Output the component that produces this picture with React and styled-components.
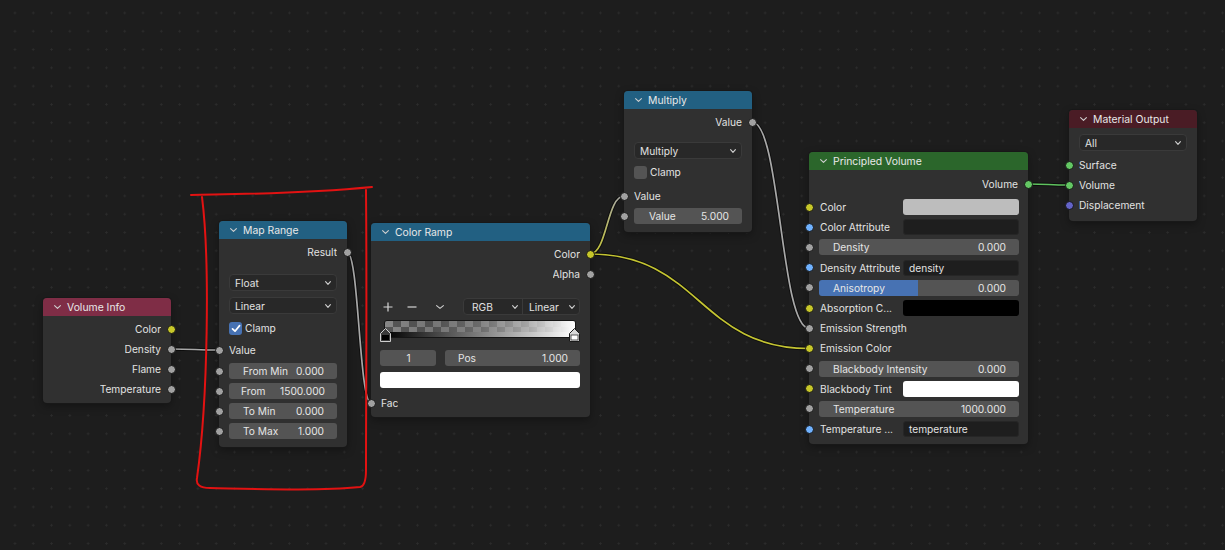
import React from 'react';
import styled, { createGlobalStyle } from 'styled-components';

const Global = createGlobalStyle`
  html, body { margin: 0; padding: 0; background: #1d1d1d; }
  body { font-family: Inter, "Noto Sans", sans-serif; }
`;

const SOCK = {
  float: '#a1a1a1',
  color: '#c7c729',
  string: '#70b2ff',
  vector: '#6363c7',
  shader: '#63c763',
};

const Canvas = styled.div`
  position: relative;
  width: 1225px;
  height: 550px;
  overflow: hidden;
  background-color: #1d1d1d;
  background-image: radial-gradient(circle, #2c2c2c 0.9px, transparent 1.3px);
  background-size: 18.3px 18.3px;
  background-position: 5.8px 3.8px;
  font-family: Inter, "Noto Sans", sans-serif;
  font-size: 10.2px;
  color: #e2e2e2;
`;

const Layer = styled.svg`
  position: absolute;
  left: 0;
  top: 0;
  width: 1225px;
  height: 550px;
  z-index: ${p => p.$z};
  pointer-events: none;
`;

const NodeBox = styled.div`
  position: absolute;
  left: ${p => p.$x}px;
  top: ${p => p.$y}px;
  width: ${p => p.$w}px;
  background: #303030;
  border-radius: 4px;
  box-shadow: 0 0 0 1px #181818, 0 3px 8px rgba(0, 0, 0, 0.35);
  z-index: 2;
`;

const Header = styled.div`
  height: 18px;
  display: flex;
  align-items: center;
  gap: 6px;
  padding-left: 11px;
  background: ${p => p.$color};
  border-radius: 4px 4px 0 0;
  color: #e8e8e8;
  font-size: 10.4px;
`;

const Body = styled.div`
  display: flex;
  flex-direction: column;
  padding: ${p => p.$pt}px 0 ${p => p.$pb}px;
`;

const Row = styled.div`
  position: relative;
  height: ${p => p.$h || 20}px;
  flex: none;
  display: flex;
  align-items: center;
  gap: 3px;
  justify-content: ${p => (p.$out ? 'flex-end' : 'flex-start')};
  padding: 0 ${p => (p.$pr ?? 10)}px 0 ${p => (p.$pl ?? 10)}px;
  white-space: nowrap;
`;

const Spacer = styled.div`
  flex: none;
  height: ${p => p.$h}px;
`;

const Socket = styled.span`
  position: absolute;
  top: 50%;
  ${p => (p.$out ? 'right' : 'left')}: -4.5px;
  margin-top: -4.5px;
  width: 7px;
  height: 7px;
  border-radius: 50%;
  background: ${p => p.$c};
  border: 1px solid #141414;
`;

const Label = styled.span`
  flex: ${p => (p.$grow ? 1 : 'none')};
  overflow: hidden;
`;

const NumField = styled.div`
  flex: ${p => (p.$w ? 'none' : 1)};
  width: ${p => (p.$w ? `${p.$w}px` : 'auto')};
  height: 16px;
  border-radius: 3px;
  background: ${p =>
    p.$fill != null
      ? `linear-gradient(to right, #4772b3 0 ${p.$fill}%, #545454 ${p.$fill}% 100%)`
      : '#545454'};
  display: flex;
  align-items: center;
  justify-content: ${p => (p.$center ? 'center' : 'space-between')};
  padding: 0 ${p => p.$padR ?? 13}px 0 ${p => p.$padL ?? 14}px;
  box-sizing: border-box;
  color: #e6e6e6;
`;

const TextField = styled.div`
  flex: none;
  width: ${p => p.$w}px;
  height: 16px;
  box-sizing: border-box;
  border-radius: 3px;
  background: #1e1e1e;
  border: 1px solid #262626;
  display: flex;
  align-items: center;
  padding-left: 5px;
  color: #e2e2e2;
`;

const Swatch = styled.div`
  flex: none;
  width: ${p => p.$w}px;
  height: 16px;
  border-radius: 3px;
  background: ${p => p.$c};
`;

const Dropdown = styled.div`
  flex: ${p => (p.$w ? 'none' : 1)};
  width: ${p => (p.$w ? `${p.$w}px` : 'auto')};
  height: 17px;
  box-sizing: border-box;
  border: 1px solid #3a3a3a;
  background: #282828;
  border-radius: 4px;
  display: flex;
  align-items: center;
  justify-content: space-between;
  padding: 0 5px 0 5px;
  color: #e2e2e2;
`;

const Check = styled.span`
  flex: none;
  width: 13px;
  height: 13px;
  border-radius: 3px;
  background: ${p => (p.$on ? '#4772b3' : '#545454')};
  display: inline-flex;
  align-items: center;
  justify-content: center;
`;

const Toolbar = styled.div`
  height: 17px;
  flex: none;
  display: flex;
  align-items: center;
  padding: 0 10px 0 9px;
`;

const IconBtn = styled.span`
  width: 16px;
  margin-left: ${p => p.$ml || 0}px;
  display: inline-flex;
  justify-content: center;
  align-items: center;
`;

const SplitDrop = styled.div`
  margin-left: auto;
  width: 117px;
  height: 17px;
  box-sizing: border-box;
  border: 1px solid #3a3a3a;
  background: #282828;
  border-radius: 4px;
  display: flex;
`;

const SplitHalf = styled.div`
  flex: 1;
  display: flex;
  align-items: center;
  justify-content: space-between;
  padding: 0 4px 0 ${p => p.$pl}px;
  border-left: ${p => (p.$div ? '1px solid #3a3a3a' : 'none')};
`;

const RampWrap = styled.div`
  position: relative;
  flex: none;
  height: 21px;
  margin: 0 14px 0 13px;
`;

const RampBar = styled.div`
  height: 18px;
  box-sizing: border-box;
  border: 1px solid #151515;
  border-radius: 3px 3px 0 0;
  overflow: hidden;
  display: flex;
  flex-direction: column;
`;

const RampAlpha = styled.div`
  flex: 1;
  background:
    linear-gradient(to right, rgba(0, 0, 0, 0), rgba(64, 64, 64, 0.25) 25%, rgba(128, 128, 128, 0.5) 50%, rgba(191, 191, 191, 0.75) 75%, #fff),
    repeating-conic-gradient(#555555 0 25%, #878787 0 50%) 0 0 / 16px 12px;
`;

const RampColor = styled.div`
  height: 5px;
  background: linear-gradient(to right, #000, #fff);
`;

const Marker = styled.svg`
  position: absolute;
  top: 8px;
  ${p => (p.$right ? 'right: -4px;' : 'left: -4px;')}
`;

const WidgetRow = styled.div`
  flex: none;
  display: flex;
  gap: 9px;
  padding: 0 10px 0 9px;
`;

const Chevron = ({ w = 7, color = '#cfcfcf' }) => (
  <svg width={w} height={4} viewBox={`0 0 ${w} 4`}>
    <path d={`M0.6,0.6 L${w / 2},3.4 L${w - 0.6},0.6`} fill="none" stroke={color} strokeWidth="1.1" strokeLinecap="round" strokeLinejoin="round" />
  </svg>
);

const Tick = () => (
  <svg width="10" height="9" viewBox="0 0 10 9">
    <path d="M1.5,4.8 L4,7.2 L8.6,1.6" fill="none" stroke="#fff" strokeWidth="1.7" strokeLinecap="round" strokeLinejoin="round" />
  </svg>
);

const PlusIcon = () => (
  <svg width="10" height="10" viewBox="0 0 10 10">
    <path d="M5,0.5 V9.5 M0.5,5 H9.5" stroke="#d6d6d6" strokeWidth="1.2" />
  </svg>
);

const MinusIcon = () => (
  <svg width="10" height="10" viewBox="0 0 10 10">
    <path d="M0.5,5 H9.5" stroke="#d6d6d6" strokeWidth="1.2" />
  </svg>
);

const Node = ({ x, y, w, title, color, pt = 3, pb = 5, children }) => (
  <NodeBox $x={x} $y={y} $w={w}>
    <Header $color={color}>
      <Chevron />
      <span>{title}</span>
    </Header>
    <Body $pt={pt} $pb={pb}>{children}</Body>
  </NodeBox>
);

const Out = ({ label, c = SOCK.float, h }) => (
  <Row $out $h={h}>
    <Label>{label}</Label>
    <Socket $out $c={c} />
  </Row>
);

const In = ({ label, c = SOCK.float, h, pl, pr, children }) => (
  <Row $h={h} $pl={pl} $pr={pr}>
    {c && <Socket $c={c} />}
    {label != null && <Label $grow={!!children}>{label}</Label>}
    {children}
  </Row>
);

const Num = ({ label, value, w, fill, padL, padR }) => (
  <NumField $w={w} $fill={fill} $padL={padL} $padR={padR}>
    <span>{label}</span>
    <span>{value}</span>
  </NumField>
);

const Drop = ({ text, w }) => (
  <Dropdown $w={w}>
    <span>{text}</span>
    <Chevron w={6} />
  </Dropdown>
);

const link = (x1, y1, x2, y2) => {
  const d = Math.abs(x2 - x1) * 0.5;
  return `M${x1},${y1} C${x1 + d},${y1} ${x2 - d},${y2} ${x2},${y2}`;
};

const LINKS = [
  { d: link(171, 349, 219, 350), c: '#a8a8a8' },
  { d: link(347, 252, 371, 403), c: '#a8a8a8' },
  { d: link(590, 254, 624, 196), c: 'url(#yg)' },
  { d: link(590, 254, 809, 348.5), c: '#c4c432' },
  { d: link(752, 122, 809, 328.3), c: '#a8a8a8' },
  { d: link(1028, 184, 1069, 185), c: '#5fc35f' },
];

export default function App() {
  return (
    <Canvas>
      <Global />
      <Layer $z={1} viewBox="0 0 1225 550">
        <defs>
          <linearGradient id="yg" gradientUnits="userSpaceOnUse" x1="590" y1="254" x2="624" y2="196">
            <stop offset="0" stopColor="#c4c432" />
            <stop offset="1" stopColor="#a8a8a8" />
          </linearGradient>
        </defs>
        {LINKS.map((l, i) => (
          <g key={i}>
            <path d={l.d} fill="none" stroke="rgba(0,0,0,0.55)" strokeWidth="3.6" />
            <path d={l.d} fill="none" stroke={l.c} strokeWidth="1.7" />
          </g>
        ))}
      </Layer>

      <Node x={43} y={298} w={128} title="Volume Info" color="#7f2d46" pb={4}>
        <Out label="Color" c={SOCK.color} />
        <Out label="Density" />
        <Out label="Flame" />
        <Out label="Temperature" />
      </Node>

      <Node x={219} y={221} w={128} title="Map Range" color="#226082" pb={6}>
        <Out label="Result" />
        <Spacer $h={12} />
        <Row $h={17}><Drop text="Float" /></Row>
        <Spacer $h={6} />
        <Row $h={17}><Drop text="Linear" /></Row>
        <Spacer $h={4} />
        <Row>
          <Check $on><Tick /></Check>
          <Label>Clamp</Label>
        </Row>
        <Spacer $h={2} />
        <In label="Value" />
        <Spacer $h={1} />
        <In><Num label="From Min" value="0.000" /></In>
        <In><Num label="From" value="1500.000" padR={12} padL={12} /></In>
        <In><Num label="To Min" value="0.000" /></In>
        <In><Num label="To Max" value="1.000" /></In>
      </Node>

      <Node x={371} y={223} w={219} title="Color Ramp" color="#226082" pb={4}>
        <Out label="Color" c={SOCK.color} />
        <Out label="Alpha" />
        <Spacer $h={14} />
        <Toolbar>
          <IconBtn><PlusIcon /></IconBtn>
          <IconBtn $ml={8}><MinusIcon /></IconBtn>
          <IconBtn $ml={12}><Chevron w={8} /></IconBtn>
          <SplitDrop>
            <SplitHalf $pl={8}><span>RGB</span><Chevron w={6} /></SplitHalf>
            <SplitHalf $pl={6} $div><span>Linear</span><Chevron w={6} /></SplitHalf>
          </SplitDrop>
        </Toolbar>
        <Spacer $h={5} />
        <RampWrap>
          <RampBar>
            <RampAlpha />
            <RampColor />
          </RampBar>
          <Marker width="11" height="14" viewBox="0 0 11 14">
            <polygon points="0.5,5.5 5.5,0.5 10.5,5.5 10.5,13.5 0.5,13.5" fill="#3a3a3a" stroke="#cfcfcf" />
            <rect x="2" y="7" width="7" height="5" fill="#000" />
          </Marker>
          <Marker $right width="11" height="14" viewBox="0 0 11 14">
            <polygon points="0.5,5.5 5.5,0.5 10.5,5.5 10.5,13.5 0.5,13.5" fill="#d8d8d8" stroke="#1a1a1a" />
            <rect x="2" y="7" width="7" height="5" fill="#fff" stroke="#333" strokeWidth="0.8" />
          </Marker>
        </RampWrap>
        <Spacer $h={9} />
        <WidgetRow>
          <NumField $w={56} $center><span>1</span></NumField>
          <Num label="Pos" value="1.000" padL={13} padR={12} />
        </WidgetRow>
        <Spacer $h={6} />
        <WidgetRow>
          <Swatch $w={200} $c="#ffffff" />
        </WidgetRow>
        <Spacer $h={5} />
        <In label="Fac" />
      </Node>

      <Node x={624} y={91} w={128} title="Multiply" color="#226082" pb={6}>
        <Out label="Value" />
        <Spacer $h={10} />
        <Row $h={17}><Drop text="Multiply" /></Row>
        <Spacer $h={3} />
        <Row>
          <Check />
          <Label>Clamp</Label>
        </Row>
        <Spacer $h={4} />
        <In label="Value" />
        <In><Num label="Value" value="5.000" padL={15} /></In>
      </Node>

      <Node x={809} y={152} w={219} title="Principled Volume" color="#2b662b" pt={4} pb={4.6}>
        <Out label="Volume" c={SOCK.shader} />
        <Spacer $h={3} />
        <In label="Color" c={SOCK.color} h={20.2} pl={11} pr={9}><Swatch $w={116} $c="#bdbdbd" /></In>
        <In label="Color Attribute" c={SOCK.string} h={20.2} pl={11} pr={9}><TextField $w={116} /></In>
        <In h={20.2} pr={9}><Num label="Density" value="0.000" /></In>
        <In label="Density Attribute" c={SOCK.string} h={20.2} pl={11} pr={9}><TextField $w={116}>density</TextField></In>
        <In h={20.2} pr={9}><Num label="Anisotropy" value="0.000" fill={49.5} /></In>
        <In label="Absorption C..." c={SOCK.color} h={20.2} pl={11} pr={9}><Swatch $w={116} $c="#000000" /></In>
        <In label="Emission Strength" h={20.2} pl={11} />
        <In label="Emission Color" c={SOCK.color} h={20.2} pl={11} />
        <In h={20.2} pr={9}><Num label="Blackbody Intensity" value="0.000" /></In>
        <In label="Blackbody Tint" c={SOCK.color} h={20.2} pl={11} pr={9}><Swatch $w={116} $c="#ffffff" /></In>
        <In h={20.2} pr={9}><Num label="Temperature" value="1000.000" /></In>
        <In label="Temperature ..." c={SOCK.string} h={20.2} pl={11} pr={9}><TextField $w={116}>temperature</TextField></In>
      </Node>

      <Node x={1069} y={110} w={128} title="Material Output" color="#4a1c25" pt={6} pb={6}>
        <Row $h={17}><Drop text="All" /></Row>
        <Spacer $h={4} />
        <In label="Surface" c={SOCK.shader} />
        <In label="Volume" c={SOCK.shader} />
        <In label="Displacement" c={SOCK.vector} />
      </Node>

      <Layer $z={3} viewBox="0 0 1225 550">
        <path
          d="M191,195 C240,194 300,194 372,187"
          fill="none" stroke="#e21212" strokeWidth="2" strokeLinecap="round"
        />
        <path
          d="M202,197 C210,260 208,400 197,478 Q195,488 210,488 C260,489 320,491 360,487 Q366,486 366,470 C366,400 367,300 366,190"
          fill="none" stroke="#e21212" strokeWidth="2" strokeLinecap="round" strokeLinejoin="round"
        />
      </Layer>
    </Canvas>
  );
}
